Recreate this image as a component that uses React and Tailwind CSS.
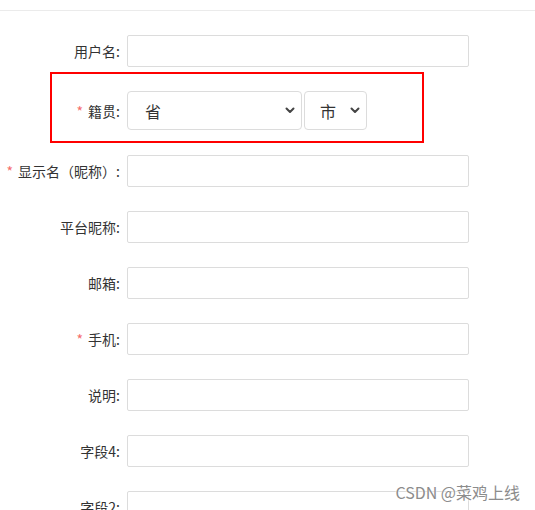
import React from 'react';

const ChevronDown = () => (
  <svg width="10" height="7" viewBox="0 0 10 7" className="shrink-0">
    <path d="M1.5 1.5 L5 5 L8.5 1.5" fill="none" stroke="#444" strokeWidth="2" strokeLinecap="round" strokeLinejoin="round" />
  </svg>
);

const Label = ({ text, required }) => (
  <div className="w-[127px] shrink-0 pr-[7px] text-right text-[14px] leading-5 text-[#333]">
    {required && <span className="mr-[5px] text-[#f56c6c]">*</span>}
    {text}
  </div>
);

const TextRow = ({ label, required }) => (
  <div className="mb-6 flex items-center">
    <Label text={label} required={required} />
    <div className="h-8 w-[342px] rounded-[2px] border border-[#dcdcdc] bg-white" />
  </div>
);

const FakeSelect = ({ value, className }) => (
  <div className={`flex h-[39px] items-center justify-between rounded-[4px] border border-[#dcdcdc] bg-white text-[16px] text-[#333] ${className}`}>
    <span>{value}</span>
    <ChevronDown />
  </div>
);

export default function App() {
  const rows = [
    { label: '显示名（昵称）:', required: true },
    { label: '平台昵称:' },
    { label: '邮箱:' },
    { label: '手机:', required: true },
    { label: '说明:' },
    { label: '字段4:' },
    { label: '字段2:' },
  ];

  return (
    <div className="relative h-[510px] w-[535px] overflow-hidden bg-white font-['Noto_Sans_CJK_SC','Microsoft_YaHei',sans-serif]">
      <div className="h-[11px] border-b border-[#ebebeb]" />

      <div className="pt-6">
        <div className="mb-6 flex items-center">
          <Label text="用户名:" />
          <div className="h-8 w-[342px] rounded-[2px] border border-[#dcdcdc] bg-white" />
        </div>

        {/* 籍贯 row with annotation box */}
        <div className="relative mb-[25px] flex items-center">
          <Label text="籍贯:" required />
          <div className="flex gap-[2px]">
            <FakeSelect value="省" className="w-[175px] pl-[17px] pr-[6px]" />
            <FakeSelect value="市" className="w-[63px] pl-[15px] pr-[6px]" />
          </div>
          <div className="pointer-events-none absolute left-[50px] top-[-19px] h-[71px] w-[374px] border-2 border-[#ff0000]" />
        </div>

        {rows.map((r) => (
          <TextRow key={r.label} label={r.label} required={r.required} />
        ))}
      </div>

      <div className="absolute bottom-[8px] right-[15px] text-[16px] leading-5 text-[#8c8c8c] [text-shadow:0_0_2px_#fff,0_0_2px_#fff]">
        CSDN @菜鸡上线
      </div>
    </div>
  );
}
